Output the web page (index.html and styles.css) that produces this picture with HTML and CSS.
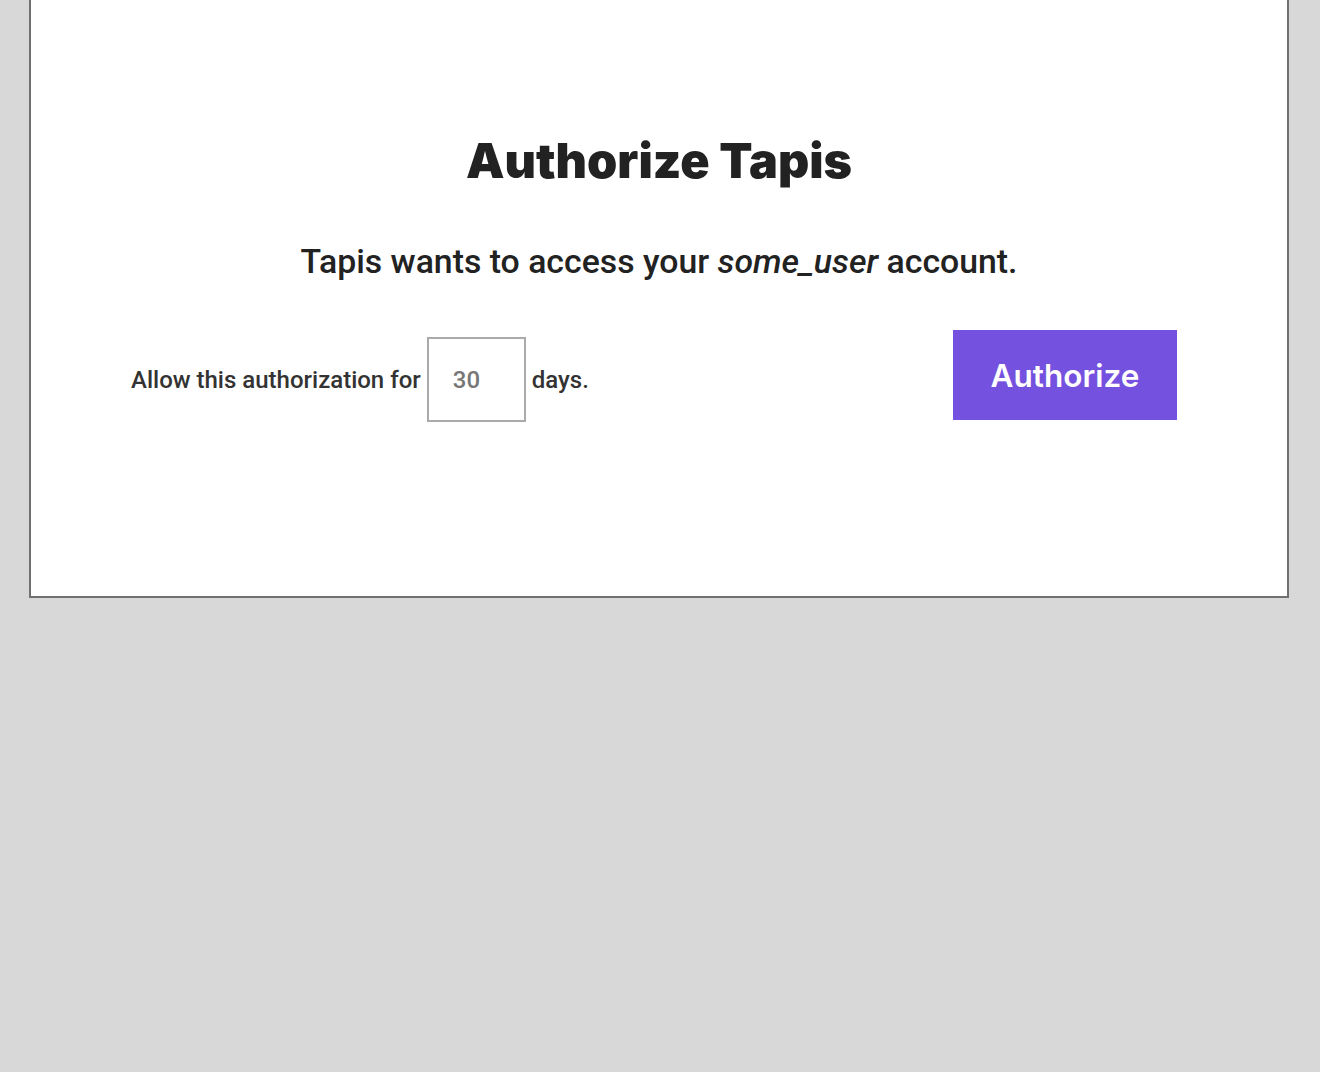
FILE: index.html
```html
<!DOCTYPE html>
<html lang="en">
<head>
<meta charset="utf-8">
<title>Authorize Tapis</title>
<link rel="stylesheet" href="styles.css">
</head>
<body>
<main class="card">
  <h1 class="title">Authorize Tapis</h1>
  <p class="lead">Tapis wants to access your <em>some_user</em> account.</p>
  <form class="auth-row">
    <label class="ttl">
      <span>Allow this authorization for</span>
      <input class="days-input" type="text" value="30">
      <span>days.</span>
    </label>
    <button class="btn" type="button">Authorize</button>
  </form>
</main>
</body>
</html>
```

FILE: styles.css
```css
html, body {
  margin: 0;
  padding: 0;
}
body {
  background: #d8d8d8;
  font-family: Roboto, "Liberation Sans", sans-serif;
  color: #222;
  min-height: 1072px;
}
.card {
  margin: -20px 31px 0 29px;
  background: #fff;
  border: 2px solid #707070;
  height: 618px;
  box-sizing: border-box;
  padding-top: 151px;
}
.title {
  margin: 0;
  text-align: center;
  font-family: Inter, sans-serif;
  font-weight: 900;
  font-size: 48.5px;
  line-height: 56px;
  color: #222;
  letter-spacing: 0;
}
.lead {
  margin: 53px 0 0;
  text-align: center;
  font-family: Roboto, sans-serif;
  font-weight: 500;
  font-size: 33.8px;
  line-height: 40px;
  color: #222;
}
.lead em {
  font-style: italic;
}
.auth-row {
  margin-top: 46px;
  padding: 0 110px 0 100px;
  display: flex;
  justify-content: space-between;
  align-items: center;
}
.ttl {
  display: flex;
  align-items: center;
  gap: 6px;
  font-weight: 500;
  font-size: 24px;
  color: #333;
  margin-top: 9px;
}
.days-input {
  width: 99px;
  height: 85px;
  box-sizing: border-box;
  border: 2px solid #aaa;
  padding: 0 0 0 24px;
  font-family: Roboto, sans-serif;
  font-weight: 500;
  font-size: 24px;
  color: #777;
  outline: none;
  background: #fff;
}
.btn {
  width: 224px;
  height: 90px;
  border: none;
  background: #7551e0;
  color: #fff;
  font-family: Inter, sans-serif;
  font-weight: 600;
  font-size: 31.5px;
  cursor: pointer;
}
```
